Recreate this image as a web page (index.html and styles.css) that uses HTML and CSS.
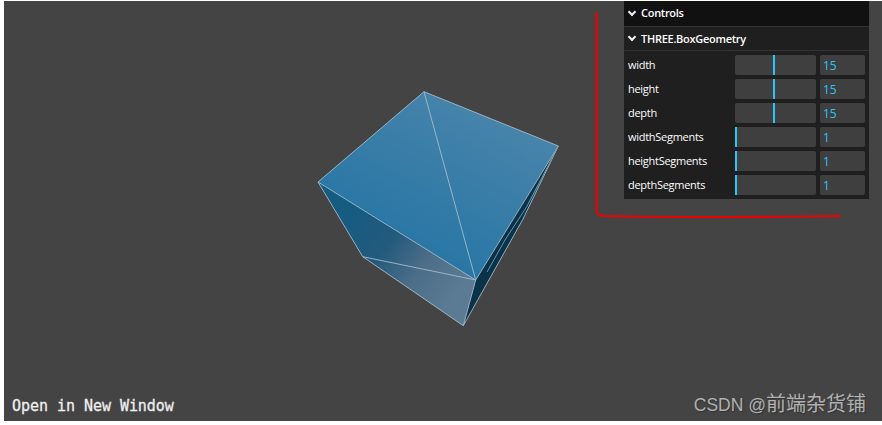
FILE: index.html
```html
<!DOCTYPE html>
<html lang="en">
<head>
    <meta charset="UTF-8">
    <title>THREE.BoxGeometry</title>
    <link rel="stylesheet" href="styles.css">
</head>
<body>
    <div class="viewer">
        <svg class="scene" width="878" height="420" viewBox="4 1 878 420">
            <defs>
                <linearGradient id="topFace" gradientUnits="userSpaceOnUse" x1="490" y1="95" x2="410" y2="250">
                    <stop offset="0" stop-color="#4a85ab"/>
                    <stop offset="1" stop-color="#2876a5"/>
                </linearGradient>
                <linearGradient id="sideFace" gradientUnits="userSpaceOnUse" x1="345" y1="215" x2="455" y2="295">
                    <stop offset="0" stop-color="#165b82"/>
                    <stop offset="0.38" stop-color="#235a7c"/>
                    <stop offset="0.68" stop-color="#4c6d88"/>
                    <stop offset="1" stop-color="#5b7a94"/>
                </linearGradient>
            </defs>
            <!-- cube -->
            <polygon points="424,91.7 558.3,146 475.7,280 318,182" fill="url(#topFace)"/>
            <polygon points="318,182 475.7,280 463.3,325.7 362.7,256.7" fill="url(#sideFace)"/>
            <polygon points="475.7,280 558.3,146 523,219 463.3,325.7" fill="#0a3349"/>
            <polygon points="558.3,146 531,200 527,206.7" fill="#2f77a0"/>
            <g class="wire">
                <polyline points="424,91.7 558.3,146 523,219 463.3,325.7 362.7,256.7 318,182 424,91.7"/>
                <line x1="318" y1="182" x2="475.7" y2="280"/>
                <line x1="475.7" y1="280" x2="558.3" y2="146"/>
                <line x1="424" y1="91.7" x2="475.7" y2="280"/>
                <line x1="362.7" y1="256.7" x2="475.7" y2="280"/>
                <line x1="475.7" y1="280" x2="463.3" y2="325.7"/>
                <polyline class="wire-faint" points="558.3,146 526.7,206.7 505,240 487,272"/>
            </g>
            <!-- red marker -->
            <path class="marker" d="M596.5 13 L596.5 211 Q597 215.5 604 216 Q700 218 840 216"/>
        </svg>

        <div class="gui">
            <div class="gui-title"><span class="arrow"></span><span class="head-text">Controls</span></div>
            <div class="gui-folder"><span class="arrow"></span>THREE.BoxGeometry</div>
            <div class="gui-rows">
                <div class="row">
                    <span class="row-name">width</span>
                    <div class="slider"><i class="thumb thumb-mid"></i></div>
                    <div class="num">15</div>
                </div>
                <div class="row">
                    <span class="row-name">height</span>
                    <div class="slider"><i class="thumb thumb-mid"></i></div>
                    <div class="num">15</div>
                </div>
                <div class="row">
                    <span class="row-name">depth</span>
                    <div class="slider"><i class="thumb thumb-mid"></i></div>
                    <div class="num">15</div>
                </div>
                <div class="row">
                    <span class="row-name">widthSegments</span>
                    <div class="slider"><i class="thumb"></i></div>
                    <div class="num">1</div>
                </div>
                <div class="row">
                    <span class="row-name">heightSegments</span>
                    <div class="slider"><i class="thumb"></i></div>
                    <div class="num">1</div>
                </div>
                <div class="row">
                    <span class="row-name">depthSegments</span>
                    <div class="slider"><i class="thumb"></i></div>
                    <div class="num">1</div>
                </div>
            </div>
        </div>

        <div class="footer">
            <a class="open-link">Open in New Window</a>
            <span class="watermark">CSDN @<span class="watermark-cjk">前端杂货铺</span></span>
        </div>
    </div>
</body>
</html>
```

FILE: styles.css
```css
html, body {
    margin: 0;
    height: 100%;
    background: #ffffff;
    overflow: hidden;
}
body {
    padding: 1px 0 0 4px;
    box-sizing: border-box;
}
.viewer {
    position: relative;
    height: 420px;
    background: #444444;
    display: flex;
    flex-direction: column;
    justify-content: flex-end;
}
.scene {
    position: absolute;
    left: 0;
    top: 0;
}
.wire {
    fill: none;
    stroke: #a3bccb;
    stroke-width: 0.9;
}
.wire-faint {
    stroke: #6fa0b8;
}
.marker {
    fill: none;
    stroke: #f00000;
    stroke-width: 2.2;
    stroke-linecap: round;
}
.gui {
    position: absolute;
    top: 0;
    right: 13px;
    width: 245px;
    font-family: "Open Sans", "Noto Sans", sans-serif;
    font-size: 11px;
    letter-spacing: -0.28px;
    color: #fefefe;
    background: #1f1f1f;
}
.gui-title, .gui-folder {
    display: flex;
    align-items: center;
    font-weight: 600;
    padding-left: 4px;
}
.gui-title {
    height: 25px;
    background: #111111;
    border-bottom: 1px solid #333333;
}
.head-text {
    margin-top: -2px;
}
.gui-folder {
    height: 23px;
    border-bottom: 1px solid #333333;
}
.arrow {
    width: 6px;
    height: 6px;
    margin: -3px 6px 0 1px;
    border-right: 2px solid #f0f0f0;
    border-bottom: 2px solid #f0f0f0;
    transform: rotate(45deg);
    box-sizing: border-box;
}
.gui-rows {
    padding: 4px;
    display: flex;
    flex-direction: column;
    gap: 4px;
}
.row {
    display: flex;
    align-items: center;
    height: 20px;
}
.row-name {
    width: 107px;
    padding-bottom: 2px;
}
.slider {
    width: 81px;
    height: 20px;
    margin-right: 4px;
    background: #3f3f3f;
    border-radius: 2px;
    position: relative;
}
.thumb {
    position: absolute;
    left: 0;
    top: 0;
    width: 2px;
    height: 20px;
    background: #2cc5fb;
}
.thumb-mid {
    left: 38px;
}
.num {
    width: 45px;
    height: 20px;
    box-sizing: border-box;
    padding: 1px 0 0 3px;
    line-height: 20px;
    font-size: 12px;
    letter-spacing: -0.2px;
    background: #3f3f3f;
    border-radius: 2px;
    color: #2cc5fb;
}
.footer {
    display: flex;
    justify-content: space-between;
    align-items: flex-end;
    padding: 0 16px 6px 8px;
    position: relative;
}
.open-link {
    font-family: "DejaVu Sans Mono", monospace;
    font-size: 15px;
    letter-spacing: -0.04px;
    -webkit-text-stroke: 0.3px #eeeeee;
    color: #eeeeee;
}
.watermark {
    font-family: "Liberation Sans", "Noto Sans CJK SC", sans-serif;
    font-size: 17.5px;
    color: #b0b0b0;
    text-shadow: 1px 1px 1px #333333;
    margin-bottom: -2px;
}
.watermark-cjk {
    font-size: 20px;
}
```
